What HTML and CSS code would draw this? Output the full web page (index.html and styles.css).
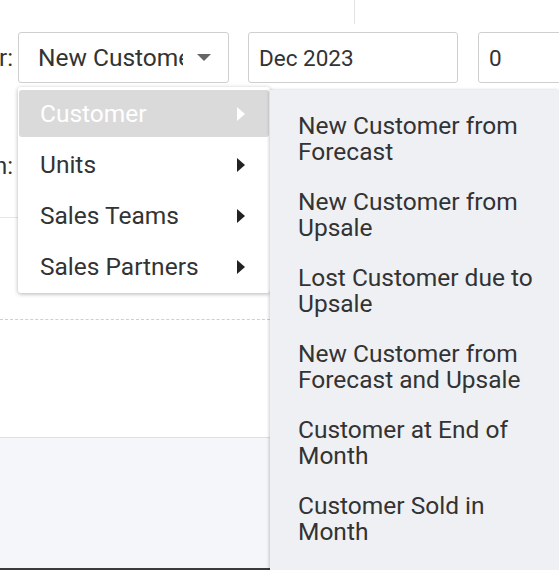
FILE: index.html
```html
<!DOCTYPE html>
<html>
<head>
<meta charset="utf-8">
<link rel="stylesheet" href="styles.css">
</head>
<body>
<div class="page">
  <div class="topbar"><div class="topbar-divider"></div></div>
  <div class="filters">
    <div class="filter-row">
      <div class="label"><span>Number:</span></div>
      <div class="select">
        <div class="select-text">New Customer from Forecast</div>
        <span class="caret"></span>
      </div>
      <div class="input">Dec 2023</div>
      <div class="input input-wide">0</div>
    </div>
    <div class="filter-row">
      <div class="label"><span>Comparison:</span></div>
    </div>
  </div>
  <div class="chart-area"><div class="dashed"></div></div>
  <div class="footer-area"></div>
  <div class="bottom-strip"></div>

  <div class="menu">
    <div class="menu-item active"><span>Customer</span><span class="arrow"></span></div>
    <div class="menu-item"><span>Units</span><span class="arrow"></span></div>
    <div class="menu-item"><span>Sales Teams</span><span class="arrow"></span></div>
    <div class="menu-item"><span>Sales Partners</span><span class="arrow"></span></div>
  </div>
  <div class="submenu">
    <div class="sub-item">New Customer from Forecast</div>
    <div class="sub-item">New Customer from Upsale</div>
    <div class="sub-item">Lost Customer due to Upsale</div>
    <div class="sub-item">New Customer from Forecast and Upsale</div>
    <div class="sub-item">Customer at End of Month</div>
    <div class="sub-item">Customer Sold in Month</div>
  </div>
</div>
</body>
</html>
```

FILE: styles.css
```css
html, body {
  margin: 0;
  padding: 0;
}
body {
  width: 559px;
  height: 570px;
  overflow: hidden;
  background: #fff;
  font-family: Roboto, "Liberation Sans", sans-serif;
  color: #333;
}
.page {
  position: relative;
  width: 559px;
  height: 570px;
  overflow: hidden;
  display: flex;
  flex-direction: column;
}
.topbar {
  height: 24px;
  flex: none;
}
.topbar-divider {
  margin-left: 354px;
  width: 1px;
  height: 24px;
  background: #e3e3e3;
}
.filters {
  flex: none;
  padding: 8px 0 26px;
  display: flex;
  flex-direction: column;
  gap: 57px;
  border-bottom: 1px solid #e3e8ee;
}
.filter-row {
  display: flex;
  align-items: center;
  height: 51px;
  overflow: hidden;
}
.label {
  flex: none;
  width: 13px;
  margin-right: 5px;
  overflow: hidden;
  display: flex;
  justify-content: flex-end;
  white-space: nowrap;
  font-size: 24px;
  color: #333;
}
.select, .input {
  flex: none;
  box-sizing: border-box;
  height: 51px;
  border: 1px solid #cfcfcf;
  border-radius: 3px;
  display: flex;
  align-items: center;
  background: #fff;
}
.select {
  width: 211px;
  padding-left: 19px;
}
.select-text {
  flex: none;
  width: 145px;
  overflow: hidden;
  white-space: nowrap;
  font-size: 24.5px;
  color: #333;
}
.caret {
  flex: none;
  margin-left: 14px;
  width: 0;
  height: 0;
  border-left: 7px solid transparent;
  border-right: 7px solid transparent;
  border-top: 7px solid #666;
}
.input {
  width: 210px;
  margin-left: 19px;
  padding-left: 10px;
  font-size: 22.5px;
  color: #333;
}
.input-wide {
  width: 90px;
  margin-left: 20px;
}
.chart-area {
  flex: none;
  height: 219px;
}
.dashed {
  margin-top: 101px;
  width: 270px;
  border-top: 1px dashed #cfcfcf;
}
.footer-area {
  flex: 1;
  background: #f4f6f9;
  border-top: 1px solid #dcdfe3;
}
.bottom-strip {
  flex: none;
  height: 2px;
  background: #3a3a3a;
}
.menu {
  position: absolute;
  left: 18px;
  top: 87px;
  width: 252px;
  box-sizing: border-box;
  padding: 3px 1px;
  display: flex;
  flex-direction: column;
  gap: 4px;
  background: #fff;
  border-radius: 3px;
  box-shadow: 0 1px 4px rgba(0, 0, 0, 0.3);
}
.menu-item {
  height: 47px;
  padding: 0 24px 0 21px;
  display: flex;
  align-items: center;
  justify-content: space-between;
  font-size: 24.5px;
  color: #333;
  border-radius: 3px;
}
.menu-item.active {
  background: #dadada;
  color: #fff;
}
.arrow {
  width: 0;
  height: 0;
  border-top: 7px solid transparent;
  border-bottom: 7px solid transparent;
  border-left: 8px solid #222;
}
.menu-item.active .arrow {
  border-left-color: #fff;
}
.submenu {
  position: absolute;
  left: 270px;
  top: 90px;
  width: 289px;
  height: 480px;
  box-sizing: border-box;
  padding: 11px 19px 0 28px;
  background: #eff0f3;
  box-shadow: -1px 0 3px rgba(0, 0, 0, 0.2);
}
.sub-item {
  padding: 12px 0;
  font-size: 24.5px;
  line-height: 26px;
  color: #333;
}
```
